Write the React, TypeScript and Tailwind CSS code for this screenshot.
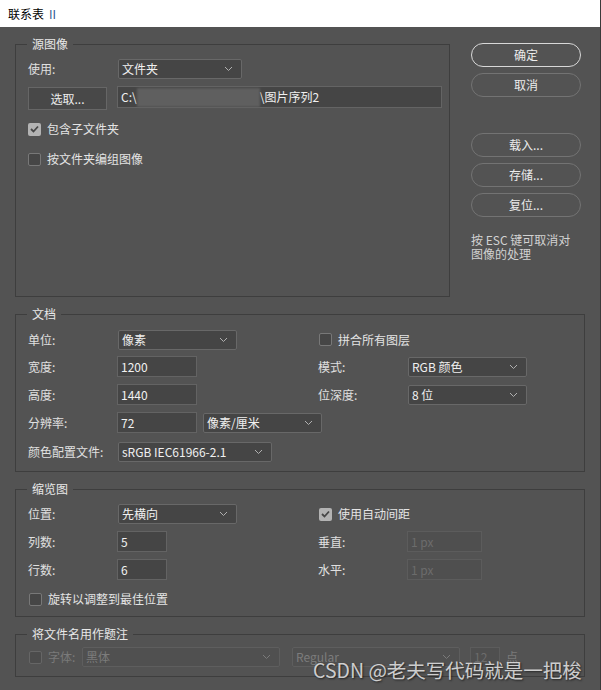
import React from "react";

const Chevron = ({ dim }: { dim?: boolean }) => (
  <svg width="9" height="6" viewBox="0 0 9 6" className="shrink-0">
    <path d="M1 1 L4.5 4.5 L8 1" fill="none" stroke={dim ? "#7a7a7a" : "#b0b0b0"} strokeWidth="1" />
  </svg>
);

const Select = ({ w, text, dim }: { w: string; text: string; dim?: boolean }) => (
  <div
    className={`${w} h-[20px] flex items-center justify-between pl-[3px] pr-[8px] rounded-[2px] border ${
      dim ? "border-[#5e5e5e] bg-[#505050] text-[#7c7c7c]" : "border-[#686868] bg-[#454545] text-[#f0f0f0]"
    }`}
  >
    <span className="leading-[18px]">{text}</span>
    <Chevron dim={dim} />
  </div>
);

const Input = ({ w, text, dim }: { w: string; text: string; dim?: boolean }) => (
  <div
    className={`${w} h-[21px] flex items-center pl-[3px] border ${
      dim ? "border-[#5c5c5c] bg-[#4f4f4f] text-[#6c6c6c]" : "border-[#636363] bg-[#454545] text-[#f2f2f2]"
    }`}
  >
    <span className="leading-[18px]">{text}</span>
  </div>
);

const Check = ({ on, label, dim }: { on?: boolean; label: string; dim?: boolean }) => (
  <div className="flex items-center h-[16px]">
    {on ? (
      <div className="w-[13px] h-[13px] rounded-[2px] bg-[#b3b3b3] flex items-center justify-center">
        <svg width="9" height="8" viewBox="0 0 9 8">
          <path d="M1 4 L3.5 6.5 L8 1.5" fill="none" stroke="#474747" strokeWidth="1.8" />
        </svg>
      </div>
    ) : (
      <div
        className={`w-[13px] h-[13px] rounded-[2px] border ${
          dim ? "border-[#666] bg-[#4c4c4c]" : "border-[#787878] bg-[#464646]"
        }`}
      />
    )}
    <span className={`ml-[6px] leading-[16px] ${dim ? "text-[#7a7a7a]" : "text-[#e4e4e4]"}`}>{label}</span>
  </div>
);

const PillButton = ({ text, primary }: { text: string; primary?: boolean }) => (
  <div
    className={`w-[110px] h-[24px] rounded-full flex items-center justify-center text-[#ececec] ${
      primary ? "border-[1.5px] border-[#d8d8d8]" : "border border-[#737373]"
    }`}
  >
    {text}
  </div>
);

const Group = ({ title, h, children }: { title: string; h: string; children: React.ReactNode }) => (
  <fieldset className={`${h} border border-[#3e3e3e] pl-[12px] pr-[6px]`}>
    <legend className="ml-[-1px] px-[5px] leading-[16px] text-[#e8e8e8]">{title}</legend>
    {children}
  </fieldset>
);

export default function App() {
  return (
    <div className="relative w-[601px] h-[690px] flex flex-col text-[12px] font-['Noto_Sans_CJK_SC','Noto_Sans',sans-serif] bg-[#535353] border-r border-[#3a3a3a]">
      <div className="h-[27px] bg-white flex items-center pl-[8px] text-[12px] text-black">
        联系表 <span className="ml-[5px] text-[#2f5a92]">II</span>
      </div>

      <div className="flex-1 pl-[15px] pt-[9px] text-[#e0e0e0]">
        <div className="flex">
          <Group title="源图像" h="w-[435px] h-[261px]">
            <div className="mt-[7px] flex items-center h-[20px]">
              <span className="w-[90px]">使用:</span>
              <Select w="w-[124px]" text="文件夹" />
            </div>
            <div className="mt-[7px] flex items-start h-[24px]">
              <div className="mt-[1px] w-[79px] h-[23px] flex items-center justify-center border border-[#666] bg-[#484848] text-[#ececec]">
                选取...
              </div>
              <div className="ml-[10px] w-[325px] h-[22px] flex items-center pl-[3px] border border-[#646464] bg-[#454545] text-[#f0f0f0]">
                <span>C:\</span>
                <div className="w-[123px] h-[19px] bg-[#5f5f5f] blur-[1px]" />
                <span>\图片序列2</span>
              </div>
            </div>
            <div className="mt-[11px]">
              <Check on label="包含子文件夹" />
            </div>
            <div className="mt-[14px]">
              <Check label="按文件夹编组图像" />
            </div>
          </Group>

          <div className="ml-[21px] mt-[7px] flex flex-col">
            <PillButton text="确定" primary />
            <div className="mt-[6px]">
              <PillButton text="取消" />
            </div>
            <div className="mt-[36px]">
              <PillButton text="载入..." />
            </div>
            <div className="mt-[6px]">
              <PillButton text="存储..." />
            </div>
            <div className="mt-[6px]">
              <PillButton text="复位..." />
            </div>
            <p className="mt-[16px] leading-[14px] text-[#d2d2d2]">
              按 ESC 键可取消对
              <br />
              图像的处理
            </p>
          </div>
        </div>

        <div className="mt-[9px] w-[570px]">
          <Group title="文档" h="h-[166px]">
            <div className="mt-[7px] flex items-center h-[21px]">
              <div className="w-[290px] flex items-center">
                <span className="w-[90px]">单位:</span>
                <Select w="w-[119px]" text="像素" />
              </div>
              <div className="ml-[1px]">
                <Check label="拼合所有图层" />
              </div>
            </div>
            <div className="mt-[6px] flex items-center h-[21px]">
              <div className="w-[290px] flex items-center">
                <span className="w-[89px]">宽度:</span>
                <Input w="w-[80px]" text="1200" />
              </div>
              <span className="w-[90px]">模式:</span>
              <Select w="w-[119px]" text="RGB 颜色" />
            </div>
            <div className="mt-[7px] flex items-center h-[21px]">
              <div className="w-[290px] flex items-center">
                <span className="w-[89px]">高度:</span>
                <Input w="w-[80px]" text="1440" />
              </div>
              <span className="w-[90px]">位深度:</span>
              <Select w="w-[119px]" text="8 位" />
            </div>
            <div className="mt-[7px] flex items-center h-[21px]">
              <span className="w-[89px]">分辨率:</span>
              <Input w="w-[80px]" text="72" />
              <div className="ml-[6px]">
                <Select w="w-[119px]" text="像素/厘米" />
              </div>
            </div>
            <div className="mt-[8px] flex items-center h-[21px]">
              <span className="w-[90px]">颜色配置文件:</span>
              <Select w="w-[154px]" text="sRGB IEC61966-2.1" />
            </div>
          </Group>

          <div className="mt-[9px]">
            <Group title="缩览图" h="h-[136px]">
              <div className="mt-[7px] flex items-center h-[20px]">
                <div className="w-[290px] flex items-center">
                  <span className="w-[90px]">位置:</span>
                  <Select w="w-[119px]" text="先横向" />
                </div>
                <div className="ml-[1px]">
                  <Check on label="使用自动间距" />
                </div>
              </div>
              <div className="mt-[7px] flex items-center h-[21px]">
                <div className="w-[290px] flex items-center">
                  <span className="w-[89px]">列数:</span>
                  <Input w="w-[50px]" text="5" />
                </div>
                <span className="w-[89px]">垂直:</span>
                <Input w="w-[75px]" text="1 px" dim />
              </div>
              <div className="mt-[7px] flex items-center h-[21px]">
                <div className="w-[290px] flex items-center">
                  <span className="w-[89px]">行数:</span>
                  <Input w="w-[50px]" text="6" />
                </div>
                <span className="w-[89px]">水平:</span>
                <Input w="w-[75px]" text="1 px" dim />
              </div>
              <div className="mt-[11px] ml-[1px]">
                <Check label="旋转以调整到最佳位置" />
              </div>
            </Group>
          </div>

          <div className="mt-[9px]">
            <Group title="将文件名用作题注" h="h-[51px]">
              <div className="mt-[5px] flex items-center h-[20px] text-[#7a7a7a]">
                <div className="ml-[1px] w-[53px]">
                  <Check label="字体:" dim />
                </div>
                <Select w="w-[198px]" text="黑体" dim />
                <div className="ml-[12px]">
                  <Select w="w-[168px]" text="Regular" dim />
                </div>
                <div className="ml-[10px]">
                  <Input w="w-[30px]" text="12" dim />
                </div>
                <span className="ml-[6px]">点</span>
              </div>
            </Group>
          </div>
        </div>
      </div>

      <div className="absolute left-[313px] top-[656px] text-[19.5px] leading-[28px] text-white/75 [text-shadow:1px_1px_2px_rgba(0,0,0,0.6)] pointer-events-none">
        CSDN @老夫写代码就是一把梭
      </div>
    </div>
  );
}
